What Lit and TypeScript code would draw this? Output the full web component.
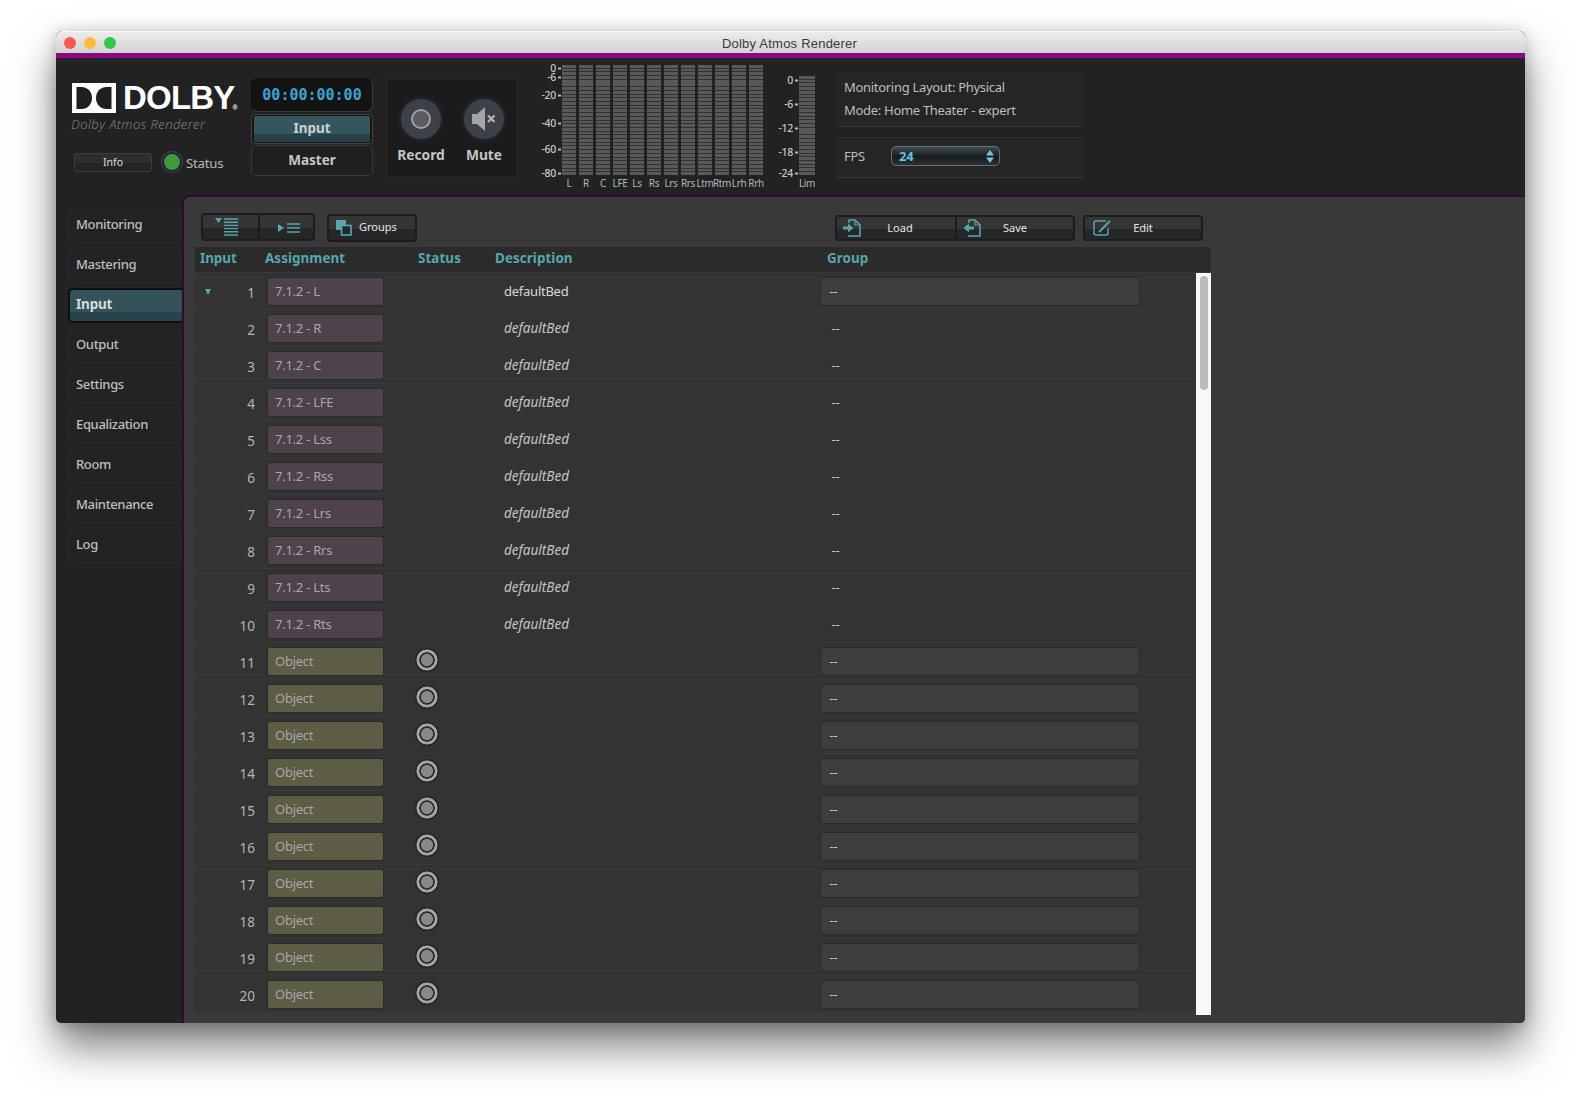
import { LitElement, html, css, svg } from "lit";
import { customElement } from "lit/decorators.js";

const channels = ["L", "R", "C", "LFE", "Ls", "Rs", "Lrs", "Rrs", "Ltm", "Rtm", "Lrh", "Rrh"];
const nav = ["Monitoring", "Mastering", "Input", "Output", "Settings", "Equalization", "Room", "Maintenance", "Log"];
const beds = ["L", "R", "C", "LFE", "Lss", "Rss", "Lrs", "Rrs", "Lts", "Rts"];
const scaleA: [string, number][] = [["0", 3], ["-6", 12], ["-20", 30], ["-40", 58], ["-60", 84], ["-80", 108]];
const scaleB: [string, number][] = [["0", 15], ["-6", 39], ["-12", 63], ["-18", 87], ["-24", 108]];

const teal = "#57a5ad";

const iconCollapse = html`<svg width="24" height="18" viewBox="0 0 24 18"><path d="M0 0h7l-3.5 5z" fill="${teal}"/><path d="M9 1h14M9 4.2h14M9 7.4h14M9 10.6h14M9 13.8h14M9 17h14" stroke="${teal}" stroke-width="1.4"/></svg>`;
const iconExpand = html`<svg width="24" height="12" viewBox="0 0 24 12"><path d="M1 2l6 4-6 4z" fill="${teal}"/><path d="M10 2h13M10 6h13M10 10h13" stroke="${teal}" stroke-width="1.7"/></svg>`;
const iconGroups = html`<svg width="16" height="16" viewBox="0 0 16 16"><rect x="0" y="0" width="10" height="10" fill="${teal}"/><rect x="5.5" y="5.5" width="9.5" height="9.5" fill="#26292a" stroke="${teal}" stroke-width="1.6"/></svg>`;
const iconLoad = html`<svg width="18" height="18" viewBox="0 0 18 18"><path d="M6 4V1h6l5 5v11H5" fill="none" stroke="${teal}" stroke-width="1.5"/><path d="M12 1v5h5" fill="none" stroke="${teal}" stroke-width="1.2"/><path d="M0 7.5h5V4.5l5.5 4.5L5 13.5v-3H0z" fill="${teal}"/></svg>`;
const iconSave = html`<svg width="18" height="18" viewBox="0 0 18 18"><path d="M6 4V1h6l5 5v11H5" fill="none" stroke="${teal}" stroke-width="1.5"/><path d="M12 1v5h5" fill="none" stroke="${teal}" stroke-width="1.2"/><path d="M11 7.5H6V4.5L0.5 9 6 13.5v-3h5z" fill="${teal}"/></svg>`;
const iconEdit = html`<svg width="18" height="16" viewBox="0 0 18 16"><path d="M13 1H3a2 2 0 0 0-2 2v10a2 2 0 0 0 2 2h10a2 2 0 0 0 2-2V8" fill="none" stroke="${teal}" stroke-width="1.5"/><path d="M6 12L17 1" stroke="${teal}" stroke-width="2"/></svg>`;

const logoMark = svg`<svg width="44" height="30" viewBox="0 0 44 30"><rect width="44" height="30" fill="#fff"/><path d="M4.5 4H9.5C16 4 20 9 20 15S16 26 9.5 26H4.5z" fill="#1f1f1f"/><path d="M39.5 4H34.5C28 4 24 9 24 15S28 26 34.5 26H39.5z" fill="#1f1f1f"/></svg>`;

@customElement("app-root")
export class AppRoot extends LitElement {
  static styles = css`
    :host {
      display: block;
      height: 1103px;
      background: #fff;
      overflow: hidden;
      font-family: "Noto Sans", sans-serif;
      box-sizing: border-box;
      padding: 31px 56px 0;
    }
    * { box-sizing: border-box; }
    .window {
      width: 1469px;
      height: 992px;
      display: flex;
      flex-direction: column;
      background: #222;
      border-radius: 6px 6px 5px 5px;
      box-shadow: 0 24px 42px rgba(0,0,0,.5), 0 2px 16px rgba(0,0,0,.22);
      overflow: hidden;
    }
    .titlebar {
      height: 22px;
      flex: none;
      display: flex;
      align-items: center;
      background: linear-gradient(#ececec, #d3d3d3);
      border-top: 1px solid #f7f7f7;
      padding-left: 8px;
      gap: 8px;
    }
    .dot { width: 12px; height: 12px; border-radius: 50%; }
    .red { background: #fc5753; }
    .yellow { background: #fdbc40; }
    .green { background: #33c748; }
    .title {
      flex: 1;
      text-align: center;
      font: 13px "Liberation Sans", sans-serif;
      color: #3a3a3a;
      letter-spacing: .22px;
      padding-right: 70px;
      padding-top: 1px;
    }
    .band { height: 5px; flex: none; background: #8a0a83; }
    .header { height: 137px; flex: none; display: flex; padding-left: 16px; }
    .brand { width: 179px; display: flex; flex-direction: column; }
    .logo { display: flex; align-items: flex-start; margin-top: 25px; height: 30px; }
    .dolby {
      font: bold 33px/30px "Liberation Sans", sans-serif;
      color: #fff;
      letter-spacing: -.8px;
      margin-left: 7px;
    }
    .reg { font: bold 7px "Liberation Sans", sans-serif; color: #fff; align-self: flex-end; margin: 0 0 2px -2px; }
    .sub { font-style: italic; font-size: 13px; letter-spacing: .45px; color: #8a8a8a; font-weight: 300; margin-top: 3px; margin-left: -1px; line-height: 16px; font-family: "Open Sans", sans-serif; }
    .statusline { display: flex; align-items: center; margin-top: 20px; margin-left: 2px; }
    .info {
      width: 78px; height: 19px;
      display: flex; align-items: center; justify-content: center;
      border: 1px solid #2d4348; border-radius: 3px;
      background: linear-gradient(#2e2e2e 50%, #242424 50%);
      color: #ddd; font-size: 10.5px;
    }
    .led {
      width: 20px; height: 20px; border-radius: 50%;
      background: #3f9b3a;
      border: 2px solid #1d2436;
      box-shadow: 0 0 0 1px #3a3f4c;
      margin-left: 10px;
    }
    .status { color: #b9b9b9; font-size: 13.2px; letter-spacing: -.2px; margin-left: 4px; margin-top: 1px; }
    .tc-col { width: 122px; margin-top: 20px; display: flex; flex-direction: column; }
    .tc {
      height: 34px; display: flex; align-items: center; justify-content: center;
      background: #131313;
      border: 1px solid #3c3c3c; border-top-color: #0f0f0f; border-left-color: #0f0f0f;
      border-radius: 7px;
      font: bold 15px "DejaVu Sans Mono", monospace;
      color: #38a6d2;
    }
    .mode-on {
      height: 30px; margin-top: 2px; padding: 1px 2px;
      border: 1px solid #444; border-radius: 4px; background: #151515;
    }
    .mode-on span {
      display: flex; align-items: center; justify-content: center; height: 100%;
      padding-bottom: 2px;
      border-radius: 2px;
      background: linear-gradient(#35565d 70%, #27414a 70%);
      color: #c8d2d4; font-weight: 700; font-size: 13.5px;
    }
    .mode-off {
      height: 31px; margin-top: 1px; padding-bottom: 2px;
      display: flex; align-items: center; justify-content: center;
      background: #1f1f1f; border: 1px solid #3a3a3a; border-radius: 4px;
      color: #c6c6c6; font-weight: 700; font-size: 13.5px;
    }
    .transport {
      width: 132px; height: 98px; margin: 21px 0 0 13px;
      background: #1b1b1b; border: 1px solid #262626;
      display: flex; justify-content: space-between;
      padding: 16px 10px 0 11px;
    }
    .tbtn { display: flex; flex-direction: column; align-items: center; width: 46px; gap: 4px; }
    .round {
      width: 46px; height: 46px; border-radius: 50%;
      display: flex; align-items: center; justify-content: center;
      background: #3e4047;
      border: 3px solid #1e2129;
    }
    .ring { width: 20px; height: 20px; border-radius: 50%; border: 2px solid #a0a0a0; background: #5a5c62; }
    .tlabel { font-weight: 700; font-size: 13.8px; color: #c4c4c4; white-space: nowrap; line-height: 18px; }
    .meters { display: flex; margin: 7px 0 0 12px; }
    .scale { position: relative; width: 32px; height: 110px; }
    .limscale { width: 29px; margin-left: 7px; }
    .tick {
      position: absolute; right: 0; height: 9px; line-height: 9px;
      display: flex; align-items: center; gap: 2px;
      transform: translateY(-4.5px);
      color: #c8c8c8; font-size: 10.5px; font-weight: 500; letter-spacing: -.3px;
    }
    .tick i { width: 3px; height: 2px; background: #bbb; margin-right: 1px; }
    .meterwrap { display: flex; flex-direction: column; }
    .bars { display: flex; gap: 3px; height: 110px; align-items: flex-end; }
    .bar {
      width: 14px; height: 100%;
      background: repeating-linear-gradient(to bottom, #595959 0 2.7px, #323232 2.7px 3.7px);
    }
    .limbar { width: 16px; height: 99px; }
    .labels { display: flex; gap: 3px; margin-top: 1px; }
    .labels span {
      width: 14px; display: flex; justify-content: center; white-space: nowrap;
      font-size: 10px; color: #a9b8bc; line-height: 14px; letter-spacing: -.35px;
    }
    .limlabels span { width: 16px; justify-content: flex-end; }
    .infocol { margin: 14px 0 0 21px; width: 248px; display: flex; flex-direction: column; gap: 10px; }
    .box {
      background: #252525; border-radius: 4px;
      border-bottom: 1px solid #3a3a3a; border-top: 1px solid #2c2c2c;
      color: #bdbdbd; font-size: 13px; letter-spacing: -.3px;
      padding-left: 8px;
    }
    .box.mon { height: 55px; display: flex; flex-direction: column; justify-content: center; gap: 3px; line-height: 20px; padding-bottom: 2px; }
    .box.fps { height: 41px; display: flex; align-items: center; padding-bottom: 3px; }
    .fpslabel { width: 47px; }
    .select {
      width: 109px; height: 20px;
      border: 1px solid #6a6f72; border-radius: 5px;
      background: linear-gradient(#3f4d51, #171a1b 55%, #2c3336);
      display: flex; align-items: center; justify-content: space-between;
      padding: 0 5px 0 7px;
      color: #62c6df; font-weight: 700; font-size: 13px;
    }
    .main { flex: 1; min-height: 0; display: flex; }
    .side { width: 126px; flex: none; padding: 13px 0 0 12px; display: flex; flex-direction: column; gap: 5px; }
    .nav {
      height: 35px; display: flex; align-items: center; padding: 0 0 3px 7px;
      border: 1px solid #2a2a2a; border-right: none; border-radius: 5px 0 0 5px;
      background: #232323;
      color: #bcbfbf; font-size: 13px; font-weight: 500; letter-spacing: -.35px;
    }
    .nav.active {
      border: 2px solid #0e0e0e; border-right: none; padding-left: 6px;
      background: linear-gradient(#335259 70%, #28434a 70%);
      color: #d5dcdd; font-weight: 700; font-size: 13.5px; letter-spacing: -.2px;
    }
    .panel {
      flex: 1; min-width: 0;
      background: #393939;
      border-top: 2px solid #300a33; border-left: 2px solid #300a33;
      border-top-left-radius: 8px;
      padding: 16px 0 0 11px;
    }
    .content { width: 1016px; }
    .toolbar { height: 34px; display: flex; align-items: flex-start; padding: 0 8px 0 6px; }
    .btngroup {
      height: 28px; display: flex;
      border: 2px solid #1c1c1c; border-radius: 4px;
      background: linear-gradient(#353535 55%, #242627 55%);
      color: #e6e6e6; font-size: 11px;
    }
    .btngroup span { margin-bottom: 2px; }
    .seg { display: flex; align-items: center; }
    .seg + .seg { border-left: 2px solid #1c1c1c; }
    .g1 { width: 114px; }
    .g1 .seg { width: 56px; justify-content: center; }
    .g1 .seg:first-child svg { margin-bottom: 1px; margin-left: -6px; }
    .g1 .seg:last-child svg { margin: 1px 0 0 6px; }
    .g2 { width: 90px; margin: 1px 0 0 12px; gap: 7px; align-items: center; padding-left: 7px; }
    .g2 span { margin-bottom: 4px; }
    .g3 { width: 240px; margin: 2px 0 0 auto; height: 26px; }
    .g3 .seg { width: 119px; padding-left: 6px; }
    .g3 .seg span { width: 46px; text-align: center; }
    .g3 .seg:first-child { gap: 16px; }
    .g3 .seg:last-child { gap: 11px; }
    .g4 { width: 120px; margin: 2px 0 0 8px; height: 26px; padding-left: 8px; align-items: center; gap: 9px; }
    .g4 span { width: 46px; text-align: center; }
    .thead {
      height: 25px; background: #2b2b2b;
      display: grid; grid-template-columns: 70px 153px 77px 332px 1fr;
      align-items: center;
      padding-bottom: 3px;
      color: #57a5ad; font-weight: 700; font-size: 13.4px; letter-spacing: .08px;
    }
    .thead span:first-child { padding-left: 5px; letter-spacing: -.05px; }
    .tbody { display: flex; height: 743px; margin-top: 1px; }
    .rows { width: 1001px; height: 740px; overflow: hidden; }
    .row {
      height: 37px; background: #333;
      border-bottom: 1px solid #393939;
      display: grid; grid-template-columns: 71.5px 148.5px 88px 316.5px 320.5px;
      align-items: center;
      color: #cfcfcf; font-size: 13px; letter-spacing: -.25px;
    }
    .num { display: flex; justify-content: space-between; align-items: center; padding: 3px 11.5px 0 10px; color: #b5b5b5; font-size: 13.5px; letter-spacing: 0; }
    .tri { width: 0; height: 0; border-left: 3.5px solid transparent; border-right: 3.5px solid transparent; border-top: 6px solid #57a5ad; margin-top: -1px; }
    .chip {
      height: 29px; width: 117.5px; display: flex; align-items: center;
      padding: 0 0 1px 7.5px;
      border: 1px solid #2b2b2b; border-radius: 3px;
      color: #a8a8a8;
    }
    .bed { background: #4e424d; }
    .obj { background: #5d5c45; }
    .radio {
      width: 24px; height: 24px; border-radius: 50%;
      margin-top: -2px;
      background: radial-gradient(circle, #858a85 0 5.7px, #2a2a2a 6.3px 7.4px, #a4a4a4 8px 10.2px, #242424 10.8px);
    }
    .desc { font-style: italic; font-size: 13.5px; letter-spacing: 0; color: #c4c4c4; padding-left: 1px; }
    .desc.plain { font-style: normal; font-size: 13px; letter-spacing: -.25px; color: #d8d8d8; padding-bottom: 1px; }
    .gplain { padding-left: 12px; color: #c8c8c8; }
    .gchip {
      height: 29px; width: 320.5px; display: flex; align-items: center; padding-left: 9px;
      background: #3d3d3d; border: 1px solid #2b2b2b; border-radius: 4px; color: #c8c8c8;
    }
    .scroll { width: 15px; height: 742px; background: #f8f8f8; padding: 3px 3px 0 4px; flex: none; }
    .thumb { height: 114px; width: 8px; background: #bcbcbc; border-radius: 4px; }
  `;

  private ticks(list: [string, number][]) {
    return list.map(([t, y]) => html`<div class="tick" style="top:${y}px"><span>${t}</span><i></i></div>`);
  }

  private row(i: number) {
    const n = i + 1;
    const isBed = i < 10;
    const first = i === 0;
    return html`<div class="row">
      <div class="num">${first ? html`<span class="tri"></span>` : html`<span></span>`}<span>${n}</span></div>
      <div class="chip ${isBed ? "bed" : "obj"}">${isBed ? `7.1.2 - ${beds[i]}` : "Object"}</div>
      <div>${isBed ? "" : html`<div class="radio"></div>`}</div>
      <div class="desc ${first ? "plain" : ""}">${isBed ? "defaultBed" : ""}</div>
      ${isBed && !first ? html`<div class="gplain">--</div>` : html`<div class="gchip">--</div>`}
    </div>`;
  }

  render() {
    return html`<div class="window">
      <div class="titlebar">
        <span class="dot red"></span><span class="dot yellow"></span><span class="dot green"></span>
        <div class="title">Dolby Atmos Renderer</div>
      </div>
      <div class="band"></div>
      <div class="header">
        <div class="brand">
          <div class="logo">${logoMark}<span class="dolby">DOLBY</span><span class="reg">®</span></div>
          <div class="sub">Dolby Atmos Renderer</div>
          <div class="statusline">
            <div class="info">Info</div><div class="led"></div><div class="status">Status</div>
          </div>
        </div>
        <div class="tc-col">
          <div class="tc">00:00:00:00</div>
          <div class="mode-on"><span>Input</span></div>
          <div class="mode-off">Master</div>
        </div>
        <div class="transport">
          <div class="tbtn"><div class="round"><div class="ring"></div></div><div class="tlabel">Record</div></div>
          <div class="tbtn">
            <div class="round">
              <svg width="28" height="26" viewBox="0 0 28 26"><path d="M2 8h5l8-7v24l-8-7H2z" fill="#a3a5a6"/><path d="M18 9.5l6.5 6.5M24.5 9.5L18 16" stroke="#b5b5b5" stroke-width="2.2"/></svg>
            </div>
            <div class="tlabel">Mute</div>
          </div>
        </div>
        <div class="meters">
          <div class="scale">${this.ticks(scaleA)}</div>
          <div class="meterwrap">
            <div class="bars">${channels.map(() => html`<div class="bar"></div>`)}</div>
            <div class="labels">${channels.map((c) => html`<span>${c}</span>`)}</div>
          </div>
          <div class="scale limscale">${this.ticks(scaleB)}</div>
          <div class="meterwrap">
            <div class="bars"><div class="bar limbar"></div></div>
            <div class="labels limlabels"><span>Lim</span></div>
          </div>
        </div>
        <div class="infocol">
          <div class="box mon"><div>Monitoring Layout: Physical</div><div>Mode: Home Theater - expert</div></div>
          <div class="box fps">
            <span class="fpslabel">FPS</span>
            <div class="select">
              <span>24</span>
              <svg width="8" height="13" viewBox="0 0 8 13"><path d="M4 0l4 5.5H0z" fill="#8fb9c6"/><path d="M4 13L0 7.5h8z" fill="#62c6df"/></svg>
            </div>
          </div>
        </div>
      </div>
      <div class="main">
        <div class="side">
          ${nav.map((n) => html`<div class="nav ${n === "Input" ? "active" : ""}">${n}</div>`)}
        </div>
        <div class="panel">
          <div class="content">
            <div class="toolbar">
              <div class="btngroup g1"><div class="seg">${iconCollapse}</div><div class="seg">${iconExpand}</div></div>
              <div class="btngroup g2">${iconGroups}<span>Groups</span></div>
              <div class="btngroup g3">
                <div class="seg">${iconLoad}<span>Load</span></div>
                <div class="seg">${iconSave}<span>Save</span></div>
              </div>
              <div class="btngroup g4">${iconEdit}<span>Edit</span></div>
            </div>
            <div class="thead"><span>Input</span><span>Assignment</span><span>Status</span><span>Description</span><span>Group</span></div>
            <div class="tbody">
              <div class="rows">${Array.from({ length: 20 }, (_, i) => this.row(i))}</div>
              <div class="scroll"><div class="thumb"></div></div>
            </div>
          </div>
        </div>
      </div>
    </div>`;
  }
}
